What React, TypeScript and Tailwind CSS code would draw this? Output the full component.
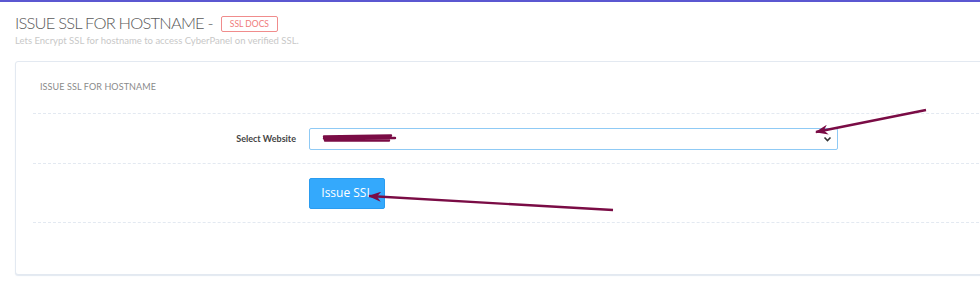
import React from "react";

const ARROW = "#7a0c45";

function Arrows() {
  return (
    <svg className="absolute inset-0 pointer-events-none" width={980} height={295}>
      <defs>
        <marker id="head" markerWidth="13" markerHeight="10" refX="12" refY="5" orient="auto" markerUnits="userSpaceOnUse">
          <path d="M0,0 L13,5 L0,10 L4,5 Z" fill={ARROW} />
        </marker>
      </defs>
      <line x1={926} y1={108} x2={816} y2={130} stroke={ARROW} strokeWidth={2.4} markerEnd="url(#head)" />
      <line x1={613} y1={208} x2={369} y2={194} stroke={ARROW} strokeWidth={2.4} markerEnd="url(#head)" />
    </svg>
  );
}

export default function App() {
  return (
    <div className="relative w-[980px] h-[295px] overflow-hidden bg-white border-t-2 border-[#5b57d1]" style={{ fontFamily: "Lato, 'Open Sans', sans-serif" }}>
      {/* page header */}
      <div className="pl-[15px] pt-[10px]">
        <div className="flex items-center gap-[8px]">
          <h2 className="text-[16.5px] font-light text-[#5a5a5a] leading-[22px] tracking-[-0.8px]">ISSUE SSL FOR HOSTNAME -</h2>
          <span className="border border-[#f08c8c] text-[#f07a7a] text-[8.5px] leading-[14px] px-[8px] rounded-[2px] mt-[2px]">SSL DOCS</span>
        </div>
        <p className="text-[9.5px] text-[#c8c8c8] leading-[12px] mt-[1px]">Lets Encrypt SSL for hostname to access CyberPanel on verified SSL.</p>
      </div>

      {/* card */}
      <div className="ml-[15px] mt-[14px] w-[990px] h-[214px] bg-white border border-[#e3e9f1] rounded-[3px] shadow-[0_1px_1px_rgba(220,228,238,0.8)]">
        <div className="pl-[24px] pt-[18px] h-[51px] text-[9px] text-[#8a8a8a] tracking-[0.1px]">ISSUE SSL FOR HOSTNAME</div>
        <div className="ml-[17px] border-t border-dashed border-[#e3e9f1]" />

        <div className="ml-[17px] h-[49px] flex items-center">
          <label className="w-[276px] text-right text-[9px] font-bold text-[#444] pr-[13px]">Select Website</label>
          <div className="relative w-[529px] h-[22px] border border-[#8fcaf5] rounded-[2px] bg-white flex items-center">
            <svg width={80} height={14} className="ml-[11px]">
              <path d="M3,4.5 L70,3.5 M3,6.5 L74,6 M4,8.5 L68,8.5" stroke={ARROW} strokeWidth={2.4} fill="none" strokeLinecap="round" />
            </svg>
            <svg className="absolute right-[5px] top-[7px]" width={9} height={7} viewBox="0 0 9 7">
              <path d="M1.5,1.5 L4.5,4.5 L7.5,1.5" stroke="#333" strokeWidth={1.6} fill="none" />
            </svg>
          </div>
        </div>
        <div className="ml-[17px] border-t border-dashed border-[#e3e9f1]" />

        <div className="ml-[17px] h-[58px] flex items-center">
          <div className="w-[276px]" />
          <button className="w-[76px] h-[31px] bg-[#34a9fc] text-white text-[12px] font-medium rounded-[2px] border border-[#2a9cf0]" style={{ fontFamily: "'Open Sans', sans-serif" }}>Issue SSL</button>
        </div>
        <div className="ml-[17px] border-t border-dashed border-[#e3e9f1]" />
      </div>

      <Arrows />
    </div>
  );
}
